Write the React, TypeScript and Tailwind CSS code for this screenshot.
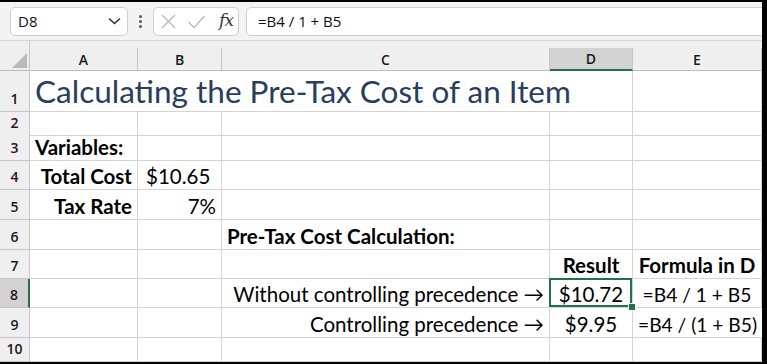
import * as React from 'react'

const COLS = 'grid grid-cols-[30px_108px_84px_328px_83px_1fr]'
const CELL_FONT = { fontFamily: 'Lato, Carlito, Calibri, sans-serif' }
const UI_FONT = { fontFamily: '"Open Sans", "Noto Sans", sans-serif' }

function RowHead({ n, active }: { n: number; active?: boolean }) {
  return (
    <div
      style={UI_FONT}
      className={
        active
          ? 'flex items-end justify-center pb-[2px] bg-[#d2d2d2] border-b border-[#c6c6c6] border-r-2 border-r-[#217346] text-[14px] font-semibold text-[#1a1a1a]'
          : 'flex items-end justify-center pb-[2px] bg-[#efefef] border-b border-r border-[#c6c6c6] text-[14px] font-semibold text-[#1a1a1a]'
      }
    >
      {n}
    </div>
  )
}

function Cell({
  children,
  className = '',
  size = 'text-[20.5px]',
}: {
  children?: React.ReactNode
  className?: string
  size?: string
}) {
  return (
    <div
      style={CELL_FONT}
      className={`flex items-end pb-[3px] px-[5px] border-r border-b border-[#d4d4d4] text-black leading-none whitespace-nowrap ${size} ${className}`}
    >
      {children}
    </div>
  )
}

function FormulaBar() {
  return (
    <div
      style={UI_FONT}
      className="flex items-center h-[39px] pl-[10px] bg-[#f3f3f3] border-b border-[#d6d6d6]"
    >
      <div className="flex items-center justify-between w-[118px] h-[29px] bg-white border border-[#cfcfcf] rounded-[5px] pl-[7px] pr-[6px] text-[15px] text-[#111]">
        <span>D8</span>
        <svg width="13" height="8" viewBox="0 0 13 8">
          <path d="M1 1.5 L6.5 6.5 L12 1.5" fill="none" stroke="#333" strokeWidth="1.6" />
        </svg>
      </div>
      <div className="flex flex-col gap-[2px] mx-[11px]">
        <span className="w-[3px] h-[3px] rounded-full bg-[#555]" />
        <span className="w-[3px] h-[3px] rounded-full bg-[#555]" />
        <span className="w-[3px] h-[3px] rounded-full bg-[#555]" />
      </div>
      <div className="flex items-center w-[86px] h-[29px] bg-white border border-[#cfcfcf] rounded-[5px] pl-[6px] pr-[5px]">
        <svg width="17" height="17" viewBox="0 0 17 17">
          <path d="M2 2 L15 15 M15 2 L2 15" fill="none" stroke="#b8b8b8" strokeWidth="1.3" />
        </svg>
        <svg width="19" height="17" viewBox="0 0 19 17" className="ml-[10px]">
          <path d="M1.5 9 L7 14.5 L17.5 3" fill="none" stroke="#b8b8b8" strokeWidth="1.3" />
        </svg>
        <span
          style={{ fontFamily: '"DejaVu Serif", "Liberation Serif", serif' }}
          className="ml-auto italic text-[17px] text-[#333] tracking-[-1px]"
        >
          fx
        </span>
      </div>
      <div className="flex items-center flex-1 h-[29px] ml-[7px] -mr-[8px] bg-white border border-[#cfcfcf] rounded-[5px] pl-[11px] text-[15px] text-[#111]">
        =B4 / 1 + B5
      </div>
    </div>
  )
}

function ColHeaders() {
  const head =
    'flex items-center justify-center border-r border-[#c6c6c6] text-[14px] font-semibold text-[#1a1a1a]'
  return (
    <div style={UI_FONT} className={`${COLS} h-[30px] bg-[#efefef] border-b border-[#bdbdbd]`}>
      <div className="relative border-r border-[#c6c6c6]">
        <svg width="16" height="15" viewBox="0 0 16 15" className="absolute left-[12px] top-[12px]">
          <path d="M15 0 L15 15 L0 15 Z" fill="#b9b9b9" />
        </svg>
      </div>
      <div className="pt-[7px] flex">
        <div className={`${head} flex-1`}>A</div>
      </div>
      <div className="pt-[7px] flex">
        <div className={`${head} flex-1`}>B</div>
      </div>
      <div className="pt-[7px] flex">
        <div className={`${head} flex-1`}>C</div>
      </div>
      <div className="pt-[7px] flex">
        <div className="flex-1 flex items-center justify-center bg-[#d2d2d2] border-r border-[#c6c6c6] border-b-2 border-b-[#217346] text-[14px] font-semibold text-[#1a1a1a]">
          D
        </div>
      </div>
      <div className="pt-[7px] flex">
        <div className={`${head} flex-1`}>E</div>
      </div>
    </div>
  )
}

export default function App() {
  return (
    <div className="w-[767px] h-[364px] overflow-hidden bg-white border-t-2 border-b-2 border-r-[5px] border-black">
      <FormulaBar />
      <ColHeaders />

      {/* row 1 */}
      <div className={`${COLS} h-[41px]`}>
        <RowHead n={1} />
        <Cell className="col-span-4 pb-[4px]" size="text-[31.5px]">
          <span className="font-normal text-[#2a3d5e]">
            Calculating the Pre-Tax Cost of an Item
          </span>
        </Cell>
        <Cell />
      </div>

      {/* row 2 */}
      <div className={`${COLS} h-[20px]`}>
        <RowHead n={2} />
        <Cell />
        <Cell />
        <Cell />
        <Cell />
        <Cell />
      </div>

      {/* row 3 */}
      <div className={`${COLS} h-[29px]`}>
        <RowHead n={3} />
        <Cell className="font-bold">Variables:</Cell>
        <Cell />
        <Cell />
        <Cell />
        <Cell />
      </div>

      {/* row 4 */}
      <div className={`${COLS} h-[29px]`}>
        <RowHead n={4} />
        <Cell className="font-bold justify-end">Total Cost</Cell>
        <Cell className="pl-[8px]">$10.65</Cell>
        <Cell />
        <Cell />
        <Cell />
      </div>

      {/* row 5 */}
      <div className={`${COLS} h-[30px]`}>
        <RowHead n={5} />
        <Cell className="font-bold justify-end">Tax Rate</Cell>
        <Cell className="justify-end">7%</Cell>
        <Cell />
        <Cell />
        <Cell />
      </div>

      {/* row 6 */}
      <div className={`${COLS} h-[30px]`}>
        <RowHead n={6} />
        <Cell />
        <Cell />
        <Cell className="font-bold">Pre-Tax Cost Calculation:</Cell>
        <Cell />
        <Cell />
      </div>

      {/* row 7 */}
      <div className={`${COLS} h-[29px]`}>
        <RowHead n={7} />
        <Cell />
        <Cell />
        <Cell />
        <Cell className="font-bold justify-center">Result</Cell>
        <Cell className="font-bold justify-center px-0">Formula in D</Cell>
      </div>

      {/* row 8 */}
      <div className={`${COLS} h-[29px]`}>
        <RowHead n={8} active />
        <Cell />
        <Cell />
        <Cell className="justify-end">Without controlling precedence →</Cell>
        <Cell className="relative justify-center">
          $10.72
          <div className="absolute -left-[1px] -top-[1px] right-0 bottom-0 border-2 border-[#217346]" />
          <div className="absolute -right-[3px] -bottom-[3px] w-[6px] h-[6px] bg-[#217346] outline outline-1 outline-white" />
        </Cell>
        <Cell className="justify-center px-0" size="text-[19.2px]">
          =B4 / 1 + B5
        </Cell>
      </div>

      {/* row 9 */}
      <div className={`${COLS} h-[30px]`}>
        <RowHead n={9} />
        <Cell />
        <Cell />
        <Cell className="justify-end">Controlling precedence →</Cell>
        <Cell className="justify-center">$9.95</Cell>
        <Cell className="justify-center px-0" size="text-[19.2px]">
          =B4 / (1 + B5)
        </Cell>
      </div>

      {/* row 10 */}
      <div className={`${COLS} h-[24px]`}>
        <RowHead n={10} />
        <Cell />
        <Cell />
        <Cell />
        <Cell />
        <Cell />
      </div>
    </div>
  )
}
